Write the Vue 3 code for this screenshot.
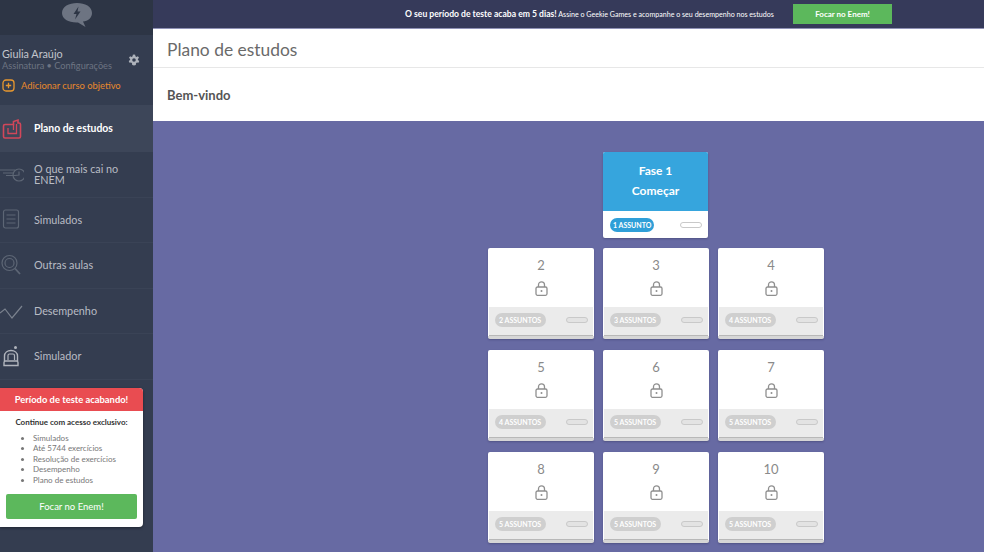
<script setup>
const nav = [
  { label: 'Plano de estudos', icon: 'plan', active: true },
  { label: 'O que mais cai no ENEM', icon: 'clock' },
  { label: 'Simulados', icon: 'doc' },
  { label: 'Outras aulas', icon: 'search' },
  { label: 'Desempenho', icon: 'chart' },
  { label: 'Simulador', icon: 'sim' }
]
const perks = ['Simulados', 'Até 5744 exercícios', 'Resolução de exercícios', 'Desempenho', 'Plano de estudos']
const phases = [
  { n: 2, s: '2 ASSUNTOS' }, { n: 3, s: '3 ASSUNTOS' }, { n: 4, s: '4 ASSUNTOS' },
  { n: 5, s: '4 ASSUNTOS' }, { n: 6, s: '5 ASSUNTOS' }, { n: 7, s: '5 ASSUNTOS' },
  { n: 8, s: '5 ASSUNTOS' }, { n: 9, s: '5 ASSUNTOS' }, { n: 10, s: '5 ASSUNTOS' }
]
</script>

<template>
  <div class="app">
    <aside class="side">
      <div class="logo">
        <svg width="32" height="26" viewBox="0 0 32 26">
          <path d="M16 1C24 1 31 4.500 31 11C31 16 27 19 22 19.500L24.500 25L17 20.500C8 21 1 17 1 11C1 4.500 8 1 16 1Z" fill="#6d7482" />
          <path d="M17.500 4.500L12.500 12H15.500L14 17.500L19.500 9.500H16.500Z" fill="#2d3545" />
        </svg>
      </div>
      <div class="profile">
        <div class="who">
          <div>
            <div class="name">Giulia Araújo</div>
            <div class="links">Assinatura • Configurações</div>
          </div>
          <svg class="gear" width="12" height="12" viewBox="0 0 12 12">
            <path d="M6 0.500L7.200 0.800L7.400 2.300L8.500 2.900L9.900 2.200L11 3.800L9.900 4.900V6.100L11.300 7L10.500 8.700L8.900 8.500L8 9.300L7.800 11L6 11.500L4.200 11L4 9.300L3.100 8.500L1.500 8.700L0.700 7L2.100 6.100V4.900L1 3.800L2.100 2.200L3.500 2.900L4.600 2.300L4.800 0.800Z M6 4.200A1.800 1.800 0 1 0 6 7.800A1.800 1.800 0 1 0 6 4.200Z" fill="#aeb3bb" fill-rule="evenodd" />
          </svg>
        </div>
        <div class="add">
          <svg width="13" height="13" viewBox="0 0 13 13" fill="none" stroke="#e8982f" stroke-width="1.300">
            <rect x="1" y="1" width="11" height="11" rx="3" />
            <path d="M6.500 3.800V9.200M3.800 6.500H9.200" />
          </svg>
          <span>Adicionar curso objetivo</span>
        </div>
      </div>
      <nav>
        <div v-for="item in nav" :key="item.label" class="nav-item" :class="{ active: item.active }">
          <svg class="nav-icon" width="24" height="24" viewBox="0 0 24 24" fill="none" stroke="#5d6675" stroke-width="1.200">
            <g v-if="item.icon === 'plan'" stroke="#d2475a" stroke-width="1.600">
              <path d="M5 7.500H13.500V4.500L18 3V6H19C20 6 20.500 6.500 20.500 7.500V19.500C20.500 20.500 20 21 19 21H5C4 21 3.500 20.500 3.500 19.500V9C3.500 8 4 7.500 5 7.500Z" />
              <path d="M8 11V16.500H16.500V7M13.500 7.500V13" stroke-width="1.300" />
            </g>
            <g v-else-if="item.icon === 'clock'">
              <circle cx="19" cy="13" r="6" />
              <path d="M0 8H15M3 11H14M6 13.500H15L19 13V9.500" />
            </g>
            <g v-else-if="item.icon === 'doc'">
              <rect x="3.500" y="3" width="15" height="18" rx="2" />
              <path d="M6.500 8H15.500M6.500 12H15.500M6.500 16H15.500" />
            </g>
            <g v-else-if="item.icon === 'search'">
              <circle cx="9.500" cy="10" r="7.500" />
              <circle cx="9.500" cy="10" r="4.500" />
              <path d="M15 15.500L20 21" stroke-width="1.800" />
            </g>
            <g v-else-if="item.icon === 'chart'">
              <path d="M0 15L5 11L12 20L22 8" stroke="#7b828e" />
            </g>
            <g v-else stroke="#b0b4bc" stroke-width="1.400">
              <path d="M4.500 17V12C4.500 8.500 7.500 6.500 11 6.500C14.500 6.500 17.500 8.500 17.500 12V17" />
              <path d="M8 16V11.500C8 10.500 8.500 10 9.500 10H13C14 10 14.500 10.500 14.500 11.500V16" stroke-width="1.200" />
              <path d="M4 21.500V18.500C4 17.800 4.500 17 5.500 17H16.500C17.500 17 18 17.800 18 18.500V21.500Z" />
              <circle cx="15.500" cy="3.500" r="1.500" fill="#b0b4bc" stroke="none" />
            </g>
          </svg>
          <span>{{ item.label }}</span>
        </div>
      </nav>
      <div class="promo">
        <div class="promo-head">Período de teste acabando!</div>
        <div class="promo-body">
          <div class="promo-title">Continue com acesso exclusivo:</div>
          <ul>
            <li v-for="perk in perks" :key="perk">{{ perk }}</li>
          </ul>
          <button class="promo-btn">Focar no Enem!</button>
        </div>
      </div>
    </aside>

    <div class="content">
      <div class="topbar">
        <span class="notice"><b>O seu período de teste acaba em 5 dias!</b> Assine o Geekie Games e acompanhe o seu desempenho nos estudos</span>
        <button class="top-btn">Focar no Enem!</button>
      </div>
      <header class="head">
        <h1>Plano de estudos</h1>
        <h2>Bem-vindo</h2>
      </header>
      <main class="board">
        <div class="card open">
          <div class="card-main">
            <div>Fase 1</div>
            <div>Começar</div>
          </div>
          <div class="card-foot">
            <span class="pill">1 ASSUNTO</span>
            <span class="bar"></span>
          </div>
        </div>
        <div class="grid">
          <div v-for="phase in phases" :key="phase.n" class="card locked">
            <div class="card-main">
              <div class="num">{{ phase.n }}</div>
              <svg width="13" height="15" viewBox="0 0 13 15" fill="none" stroke="#8f8f8f" stroke-width="1.300">
                <rect x="1" y="6" width="11" height="8.300" rx="1.500" />
                <path d="M3.500 6V3.800C3.500 2 4.800 0.800 6.500 0.800C8.200 0.800 9.500 2 9.500 3.800V6" />
                <circle cx="6.500" cy="10" r="1" fill="#8f8f8f" stroke="none" />
              </svg>
            </div>
            <div class="card-foot">
              <span class="pill">{{ phase.s }}</span>
              <span class="bar"></span>
            </div>
          </div>
        </div>
      </main>
    </div>
  </div>
</template>

<style>
html, body { margin: 0; overflow: hidden; }
</style>

<style scoped>
.app {
  display: flex;
  width: 984px;
  height: 552px;
  overflow: hidden;
  font-family: Lato, "Liberation Sans", sans-serif;
  background: #676aa3;
}
.side {
  width: 153px;
  flex: none;
  background: #343d50;
  display: flex;
  flex-direction: column;
  color: #c9ccd2;
}
.logo {
  height: 35px;
  background: #2d3545;
  display: flex;
  justify-content: center;
  align-items: flex-start;
  padding-top: 2px;
  box-sizing: border-box;
}
.profile {
  height: 70px;
  box-sizing: border-box;
  padding: 13px 13px 0 2px;
}
.who { display: flex; justify-content: space-between; align-items: center; }
.name { font-size: 10.800px; line-height: 12px; color: #c3c6cc; }
.links { font-size: 9.200px; line-height: 11px; color: #6d7482; white-space: nowrap; }
.add {
  display: flex;
  align-items: center;
  gap: 6px;
  margin-top: 8px;
  font-size: 9.400px;
  color: #e8892c;
  white-space: nowrap;
}
.nav-item {
  height: 45.500px;
  box-sizing: border-box;
  display: flex;
  align-items: center;
  gap: 10px;
  padding: 0 10px 1px 0;
  font-size: 10.800px;
  line-height: 11px;
  border-bottom: 1px solid #3a4356;
  color: #b9bcc4;
}
.nav-item.active {
  height: 47px;
  padding-bottom: 0;
  background: #3d4659;
  color: #fff;
  border-bottom: 0;
  font-weight: 700;
  font-size: 10.400px;
}
.nav-icon { flex: none; }
.promo {
  width: 143px;
  margin-top: 8px;
  height: 139px;
  border-radius: 0 4px 4px 0;
  background: #fff;
  overflow: hidden;
  box-shadow: 0 1px 3px rgba(0, 0, 0, 0.4);
}
.promo-head {
  height: 23px;
  line-height: 23px;
  background: #e94c51;
  color: #fff;
  font-size: 9.400px;
  font-weight: 700;
  text-align: center;
  white-space: nowrap;
}
.promo-body { padding: 5px 6px 0; }
.promo-title {
  font-size: 8px;
  font-weight: 700;
  color: #333;
  text-align: center;
  white-space: nowrap;
  line-height: 12px;
}
ul {
  list-style: disc;
  margin: 5px 0 0;
  padding: 0 0 0 27px;
  font-size: 8px;
  line-height: 10.500px;
  color: #777;
}
.promo-btn {
  display: block;
  width: 131px;
  height: 25px;
  margin-top: 9px;
  padding: 0;
  border: 0;
  border-radius: 2px;
  background: #5cb85c;
  color: #fff;
  font: 9.500px Lato, "Liberation Sans", sans-serif;
}
.content { flex: 1; min-width: 0; display: flex; flex-direction: column; }
.topbar {
  height: 29px;
  flex: none;
  box-sizing: border-box;
  background: #363a5a;
  display: flex;
  align-items: center;
  padding-left: 252px;
  color: #fff;
  border-bottom: 1px solid #8f91b5;
}
.notice { font-size: 7.100px; white-space: nowrap; width: 388px; }
.notice b { font-size: 8.600px; }
.top-btn {
  width: 99px;
  height: 20px;
  padding: 0;
  border: 0;
  background: #5cb85c;
  color: #fff;
  font: 700 8px Lato, "Liberation Sans", sans-serif;
}
.head { height: 92px; flex: none; background: #fff; }
h1 {
  margin: 0;
  height: 39px;
  box-sizing: border-box;
  padding-left: 14px;
  font-size: 17.400px;
  font-weight: 400;
  line-height: 41px;
  color: #6a6a6a;
  border-bottom: 1px solid #e7e7e7;
}
h2 {
  margin: 0;
  padding-left: 14px;
  font-size: 13px;
  font-weight: 700;
  line-height: 55px;
  color: #555;
}
.board { flex: 1; padding: 31px 0 0 335px; min-height: 0; }
.grid {
  display: grid;
  grid-template-columns: 106px 106px 106px;
  column-gap: 9px;
  row-gap: 11px;
}
.card {
  background: #fff;
  border-radius: 2px;
  overflow: hidden;
  display: flex;
  flex-direction: column;
  box-sizing: border-box;
  box-shadow: 0 1px 2px rgba(40, 40, 80, 0.35);
}
.open { width: 105px; height: 86px; margin: 0 0 10px 115px; }
.locked { height: 91px; border-bottom: 3px solid #d6d6d6; }
.card-main {
  display: flex;
  flex-direction: column;
  align-items: center;
  flex: none;
}
.open .card-main {
  height: 59px;
  padding-bottom: 2px;
  box-sizing: border-box;
  background: #36a5dd;
  color: #fff;
  font-size: 12px;
  font-weight: 700;
  line-height: 20px;
  justify-content: center;
}
.locked .card-main { height: 59px; padding-top: 9px; box-sizing: border-box; gap: 7px; }
.num { font-size: 13px; line-height: 17px; color: #8a8a8a; }
.card-foot {
  flex: 1;
  display: flex;
  align-items: center;
  justify-content: space-between;
  padding: 0 6px 0 7px;
}
.locked .card-foot {
  background: #ebebeb;
  margin: 0 1px;
  padding: 0 5px 2px 6px;
  border-bottom: 1px solid #b8b8b8;
}
.pill {
  height: 14px;
  padding: 0 3px;
  border-radius: 7px;
  background: #2f9fd8;
  color: #fff;
  font-size: 7px;
  font-weight: 700;
  line-height: 14px;
  white-space: nowrap;
}
.locked .pill { background: #cfcfcf; padding: 0 5px 0 4px; }
.bar {
  width: 22px;
  height: 6px;
  box-sizing: border-box;
  border: 1px solid #c9c9c9;
  border-radius: 3px;
  background: #fff;
}
.locked .bar { background: #e3e3e3; }
</style>
